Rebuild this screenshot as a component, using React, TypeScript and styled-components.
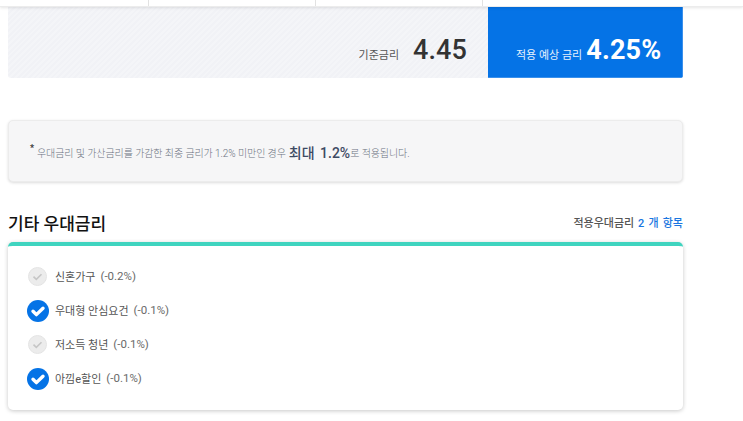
import React from "react";
import styled, { createGlobalStyle } from "styled-components";

const GlobalStyle = createGlobalStyle`
  html, body {
    margin: 0;
    padding: 0;
    background: #fff;
    overflow: hidden;
  }
  body {
    font-family: Roboto, "Noto Sans CJK KR", sans-serif;
  }
`;

const Page = styled.div`
  width: 743px;
  height: 421px;
  overflow: hidden;
`;

const TopTabs = styled.div`
  display: grid;
  grid-template-columns: 149px 167px 167px 1fr;
  height: 6px;
  border-bottom: 1px solid #ececec;
  box-shadow: 0 1px 3px rgba(0, 0, 0, 0.1);
  position: relative;
  z-index: 1;
`;

const TopTab = styled.div`
  border-right: 1px solid #e2e2e2;
  &:last-child {
    border-right: 0;
  }
`;

const Content = styled.div`
  width: 675px;
  margin-left: 8px;
`;

const RateRow = styled.div`
  display: flex;
  height: 71px;
  border-radius: 0 0 3px 3px;
  overflow: hidden;
`;

const BaseRate = styled.div`
  width: 480px;
  display: flex;
  justify-content: flex-end;
  align-items: baseline;
  gap: 14px;
  padding: 27px 21px 0 0;
  box-sizing: border-box;
  background: repeating-linear-gradient(
    135deg,
    #f1f2f6 0,
    #f1f2f6 2px,
    #f4f5f8 2px,
    #f4f5f8 4px
  );
`;

const BaseLabel = styled.span`
  font-size: 11px;
  color: #555;
`;

const BaseValue = styled.span`
  font-size: 27px;
  font-weight: 500;
  color: #333;
  letter-spacing: 0.1px;
`;

const AppliedRate = styled.div`
  flex: 1;
  display: flex;
  align-items: baseline;
  gap: 4px;
  padding: 27px 0 0 28px;
  box-sizing: border-box;
  background: #0573e6;
  border-right: 1px solid #3a90ec;
  border-bottom: 1px solid #3a90ec;
  color: #fff;
`;

const AppliedLabel = styled.span`
  font-size: 11px;
  color: #e6f1fd;
`;

const AppliedValue = styled.span`
  font-size: 27px;
  font-weight: 700;
  letter-spacing: 0.2px;
`;

const Note = styled.div`
  margin-top: 42px;
  height: 62px;
  box-sizing: border-box;
  display: flex;
  align-items: center;
  padding: 2px 0 0 21px;
  background: #f6f6f7;
  border: 1px solid #ececec;
  border-radius: 5px;
  box-shadow: 0 1px 3px rgba(0, 0, 0, 0.14);
  font-size: 10px;
  letter-spacing: -0.09px;
  font-weight: 300;
  color: #6b7280;
`;

const Bullet = styled.span`
  font-size: 9px;
  font-weight: 700;
  color: #333;
  margin-right: 3px;
  align-self: flex-start;
  margin-top: 20px;
`;

const NoteStrong = styled.strong`
  font-size: 14px;
  font-weight: 500;
  letter-spacing: 0;
  color: #3d4a63;
  margin-left: 3px;
  word-spacing: 2px;
`;

const SectionHeader = styled.div`
  display: flex;
  justify-content: space-between;
  align-items: center;
  margin-top: 29px;
  height: 22px;
`;

const SectionTitle = styled.h2`
  margin: 0;
  font-size: 17px;
  font-weight: 500;
  color: #111;
`;

const AppliedCount = styled.div`
  font-size: 11px;
  font-weight: 500;
  color: #555;
`;

const CountValue = styled.span`
  color: #1a76e0;
  margin-left: 1px;
  word-spacing: 1.5px;
`;

const Card = styled.div`
  margin-top: 9px;
  height: 168px;
  box-sizing: border-box;
  border-top: 4px solid #3fd4bf;
  border-radius: 5px;
  background: #fff;
  box-shadow: 0 1px 4px rgba(0, 0, 0, 0.22);
  padding: 13px 0 0 18px;
  display: flex;
  flex-direction: column;
`;

const Item = styled.div`
  height: 34px;
  display: flex;
  align-items: center;
  font-size: 11px;
  color: #555;
`;

const CheckSlot = styled.span`
  width: 23px;
  margin: 1px 6px 0 0;
  display: flex;
  justify-content: center;
`;

const ItemPercent = styled.span`
  color: #6a6a6a;
  font-size: 11.5px;
  margin-left: 5px;
`;

const Check = ({ on }: { on: boolean }) =>
  on ? (
    <svg width="22" height="22" viewBox="0 0 22 22">
      <circle cx="11" cy="11" r="11" fill="#0573e6" />
      <path
        d="M6 11.2 9.4 14.6 16 8.2"
        fill="none"
        stroke="#fff"
        strokeWidth="3.4"
        strokeLinecap="round"
        strokeLinejoin="round"
      />
    </svg>
  ) : (
    <svg width="19" height="19" viewBox="0 0 19 19">
      <circle cx="9.5" cy="9.5" r="9" fill="#ececec" stroke="#e4e4e4" />
      <path
        d="M5.5 9.6 8.3 12.4 13.5 7.2"
        fill="none"
        stroke="#c6c6c6"
        strokeWidth="1.6"
      />
    </svg>
  );

const items = [
  { name: "신혼가구", rate: "(-0.2%)", on: false },
  { name: "우대형 안심요건", rate: "(-0.1%)", on: true },
  { name: "저소득 청년", rate: "(-0.1%)", on: false },
  { name: "아낌e할인", rate: "(-0.1%)", on: true },
];

const App = () => {
  return (
    <Page>
      <GlobalStyle />
      <TopTabs>
        <TopTab />
        <TopTab />
        <TopTab />
        <TopTab />
      </TopTabs>
      <Content>
        <RateRow>
          <BaseRate>
            <BaseLabel>기준금리</BaseLabel>
            <BaseValue>4.45</BaseValue>
          </BaseRate>
          <AppliedRate>
            <AppliedLabel>적용 예상 금리</AppliedLabel>
            <AppliedValue>4.25%</AppliedValue>
          </AppliedRate>
        </RateRow>
        <Note>
          <Bullet>*</Bullet>
          우대금리 및 가산금리를 가감한 최종 금리가 1.2% 미만인 경우
          <NoteStrong>최대 1.2%</NoteStrong>로 적용됩니다.
        </Note>
        <SectionHeader>
          <SectionTitle>기타 우대금리</SectionTitle>
          <AppliedCount>
            적용우대금리 <CountValue>2 개 항목</CountValue>
          </AppliedCount>
        </SectionHeader>
        <Card>
          {items.map((item) => (
            <Item key={item.name}>
              <CheckSlot>
                <Check on={item.on} />
              </CheckSlot>
              <span>{item.name}</span>
              <ItemPercent>{item.rate}</ItemPercent>
            </Item>
          ))}
        </Card>
      </Content>
    </Page>
  );
};

export default App;
